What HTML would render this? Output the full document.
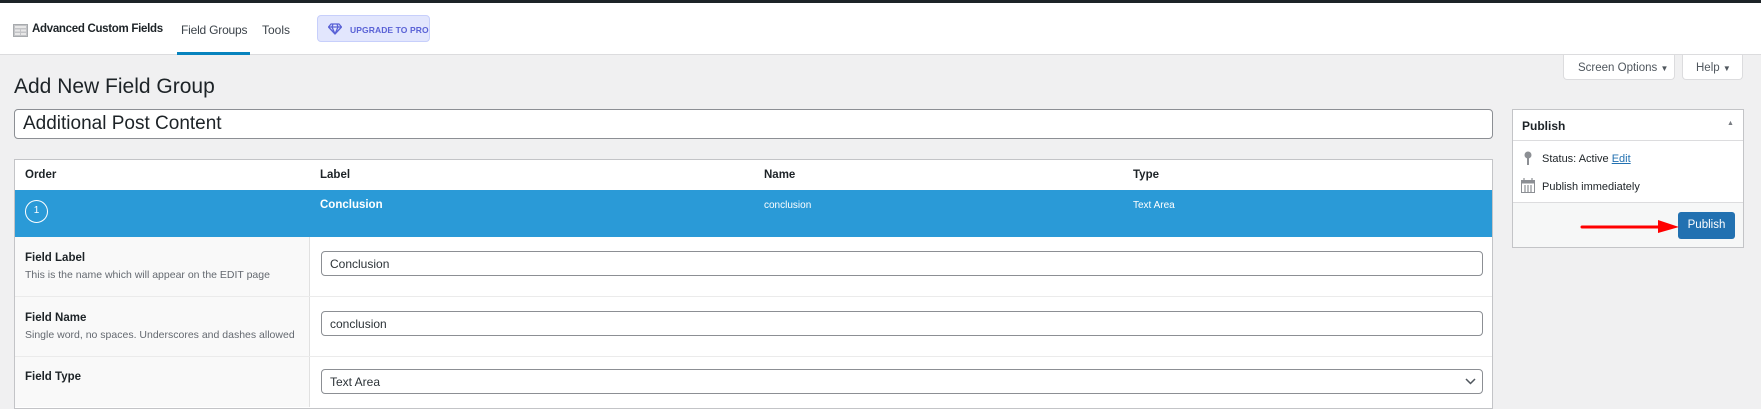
<!DOCTYPE html>
<html><head><meta charset="utf-8"><style>
*{box-sizing:border-box;margin:0;padding:0}
body{width:1761px;height:401px;overflow:hidden;background:#f0f0f1;font-family:"Liberation Sans",Arial,sans-serif;color:#1d2327;position:relative;font-size:12px}
.a{position:absolute;white-space:nowrap}
.inp{position:absolute;background:#fff;border:1px solid #8c8f94;border-radius:4px;font-size:12px;padding-left:8px;display:flex;align-items:center;color:#2c3338}
.lbl{position:absolute;left:25px;font-weight:bold;font-size:11.5px;color:#1d2327}
.desc{position:absolute;left:25px;font-size:10.5px;color:#646970;white-space:nowrap}
</style></head><body>
<div class="a" style="left:0;top:0;width:1761px;height:3px;background:#1d2327"></div>
<div class="a" style="left:0;top:3px;width:1761px;height:52px;background:#fff;border-bottom:1px solid #dcdcde"></div>
<svg class="a" style="left:13px;top:24px" width="15" height="13" viewBox="0 0 15 13"><rect x="0.5" y="0.5" width="14" height="12" fill="#c3c4c7" stroke="#a7aaad"/><rect x="2" y="2" width="11" height="2" fill="#e8e8e8"/><rect x="2" y="5.5" width="5" height="2" fill="#e8e8e8"/><rect x="8" y="5.5" width="5" height="2" fill="#e8e8e8"/><rect x="2" y="9" width="5" height="2" fill="#e8e8e8"/><rect x="8" y="9" width="5" height="2" fill="#e8e8e8"/></svg>
<div class="a" style="left:32px;top:23px;font-size:11.5px;font-weight:bold;letter-spacing:-0.3px">Advanced Custom Fields</div>
<div class="a" style="left:181px;top:23px;font-size:12px;color:#3c434a;letter-spacing:-0.2px">Field Groups</div>
<div class="a" style="left:177px;top:52px;width:73px;height:3px;background:#0783be"></div>
<div class="a" style="left:262px;top:23px;font-size:12px;color:#3c434a">Tools</div>
<div class="a" style="left:317px;top:15px;width:113px;height:27px;background:#e2e6fd;border:1px solid #c7cffb;border-radius:4px"></div>
<svg class="a" style="left:328px;top:23px" width="14" height="12" viewBox="0 0 14 12"><path d="M3 1h8l2.5 3L7 11 0.5 4z M0.5 4h13 M5 1 4 4l3 7 3-7-1-3" fill="none" stroke="#5a62d6" stroke-width="1.3" stroke-linejoin="round"/></svg>
<div class="a" style="left:350px;top:25px;font-size:8.5px;font-weight:bold;color:#5a62d6;letter-spacing:0.1px">UPGRADE TO PRO</div>

<div class="a" style="left:1563px;top:55px;width:112px;height:25px;background:#fff;border:1px solid #dcdcde;border-top:none;border-radius:0 0 4px 4px;font-size:11.5px;color:#50575e;padding:7px 0 0 14px">Screen Options <span style="font-size:8px">&#9660;</span></div>
<div class="a" style="left:1682px;top:55px;width:61px;height:25px;background:#fff;border:1px solid #dcdcde;border-top:none;border-radius:0 0 4px 4px;font-size:11.5px;color:#50575e;padding:7px 0 0 13px">Help <span style="font-size:8px">&#9660;</span></div>

<div class="a" style="left:14px;top:75px;font-size:21px;color:#1d2327">Add New Field Group</div>
<div class="inp" style="left:14px;top:109px;width:1479px;height:30px;font-size:19px;padding-left:8px;color:#1d2327;line-height:28px">Additional Post Content</div>

<div class="a" style="left:14px;top:159px;width:1479px;height:250px;background:#fff;border:1px solid #c3c4c7"></div>
<div class="a" style="left:25px;top:169px;font-weight:bold;font-size:11.5px">Order</div>
<div class="a" style="left:320px;top:169px;font-weight:bold;font-size:11.5px">Label</div>
<div class="a" style="left:764px;top:169px;font-weight:bold;font-size:11.5px">Name</div>
<div class="a" style="left:1133px;top:169px;font-weight:bold;font-size:11.5px">Type</div>
<div class="a" style="left:15px;top:190px;width:1477px;height:47px;background:#2a9ad7"></div>
<div class="a" style="left:25px;top:200px;width:23px;height:23px;border:1.5px solid #fff;border-radius:50%;color:#fff;font-size:10px;text-align:center;line-height:20px">1</div>
<div class="a" style="left:320px;top:199px;color:#fff;font-weight:bold;font-size:11.5px">Conclusion</div>
<div class="a" style="left:764px;top:200px;color:#fff;font-size:10px">conclusion</div>
<div class="a" style="left:1133px;top:200px;color:#fff;font-size:10px">Text Area</div>

<div class="a" style="left:15px;top:237px;width:295px;height:170px;background:#f9f9f9;border-right:1px solid #e1e1e1"></div>
<div class="a" style="left:15px;top:296px;width:1477px;height:1px;background:#ebebeb"></div>
<div class="a" style="left:15px;top:356px;width:1477px;height:1px;background:#ebebeb"></div>

<div class="lbl" style="top:252px">Field Label</div>
<div class="desc" style="top:269px">This is the name which will appear on the EDIT page</div>
<div class="inp" style="left:321px;top:251px;width:1162px;height:25px">Conclusion</div>

<div class="lbl" style="top:312px">Field Name</div>
<div class="desc" style="top:329px">Single word, no spaces. Underscores and dashes allowed</div>
<div class="inp" style="left:321px;top:311px;width:1162px;height:25px">conclusion</div>

<div class="lbl" style="top:371px">Field Type</div>
<div class="inp" style="left:321px;top:369px;width:1162px;height:25px">Text Area</div>
<svg class="a" style="left:1465px;top:378px" width="11" height="7" viewBox="0 0 11 7"><path d="M1 1l4.5 4.5L10 1" fill="none" stroke="#50575e" stroke-width="1.5"/></svg>

<div class="a" style="left:1512px;top:109px;width:232px;height:139px;background:#fff;border:1px solid #c3c4c7"></div>
<div class="a" style="left:1513px;top:140px;width:230px;height:1px;background:#dcdcde"></div>
<div class="a" style="left:1522px;top:119px;font-weight:bold;font-size:12px">Publish</div>
<div class="a" style="left:1727px;top:120px;font-size:7px;color:#787c82">&#9650;</div>
<svg class="a" style="left:1524px;top:151px" width="8" height="15" viewBox="0 0 8 15"><circle cx="4" cy="4" r="3.5" fill="#8c8f94"/><rect x="3" y="6" width="2" height="8" fill="#8c8f94"/></svg>
<div class="a" style="left:1542px;top:153px;font-size:11px">Status: Active <span style="color:#2271b1;text-decoration:underline">Edit</span></div>
<svg class="a" style="left:1521px;top:178px" width="14" height="15" viewBox="0 0 14 15"><rect x="0.5" y="2.5" width="13" height="12" fill="none" stroke="#8c8f94"/><rect x="0.5" y="2.5" width="13" height="3" fill="#8c8f94"/><path d="M3 0v4M11 0v4M4 7v7M7 7v7M10 7v7" stroke="#8c8f94" stroke-width="1.2"/></svg>
<div class="a" style="left:1542px;top:181px;font-size:11px">Publish immediately</div>
<div class="a" style="left:1513px;top:202px;width:230px;height:45px;background:#f6f7f7;border-top:1px solid #dcdcde"></div>
<div class="a" style="left:1678px;top:212px;width:57px;height:27px;background:#2271b1;border-radius:3px;color:#fff;font-size:11.5px;text-align:center;line-height:27px">Publish</div>
<svg class="a" style="left:1580px;top:219px" width="100" height="16" viewBox="0 0 100 16"><path d="M2 8H80" stroke="#f00" stroke-width="3" stroke-linecap="round"/><path d="M78 1L99 8 78 14z" fill="#f00"/></svg>
</body></html>
